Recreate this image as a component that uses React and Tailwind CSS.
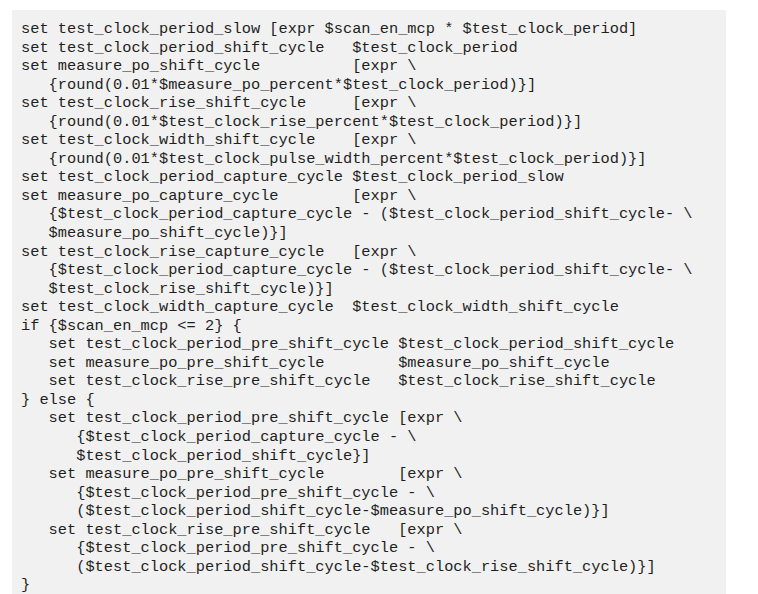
const code = `set test_clock_period_slow [expr $scan_en_mcp * $test_clock_period]
set test_clock_period_shift_cycle   $test_clock_period
set measure_po_shift_cycle          [expr \\
   {round(0.01*$measure_po_percent*$test_clock_period)}]
set test_clock_rise_shift_cycle     [expr \\
   {round(0.01*$test_clock_rise_percent*$test_clock_period)}]
set test_clock_width_shift_cycle    [expr \\
   {round(0.01*$test_clock_pulse_width_percent*$test_clock_period)}]
set test_clock_period_capture_cycle $test_clock_period_slow
set measure_po_capture_cycle        [expr \\
   {$test_clock_period_capture_cycle - ($test_clock_period_shift_cycle- \\
   $measure_po_shift_cycle)}]
set test_clock_rise_capture_cycle   [expr \\
   {$test_clock_period_capture_cycle - ($test_clock_period_shift_cycle- \\
   $test_clock_rise_shift_cycle)}]
set test_clock_width_capture_cycle  $test_clock_width_shift_cycle
if {$scan_en_mcp <= 2} {
   set test_clock_period_pre_shift_cycle $test_clock_period_shift_cycle
   set measure_po_pre_shift_cycle        $measure_po_shift_cycle
   set test_clock_rise_pre_shift_cycle   $test_clock_rise_shift_cycle
} else {
   set test_clock_period_pre_shift_cycle [expr \\
      {$test_clock_period_capture_cycle - \\
      $test_clock_period_shift_cycle}]
   set measure_po_pre_shift_cycle        [expr \\
      {$test_clock_period_pre_shift_cycle - \\
      ($test_clock_period_shift_cycle-$measure_po_shift_cycle)}]
   set test_clock_rise_pre_shift_cycle   [expr \\
      {$test_clock_period_pre_shift_cycle - \\
      ($test_clock_period_shift_cycle-$test_clock_rise_shift_cycle)}]
}`;

export default function App() {
  return (
    <div className="bg-white h-[594px] w-[758px] overflow-hidden pt-[10px] pl-[12px]">
      <pre className="w-[714px] h-[600px] bg-[#f1f1f1] pl-[9px] pt-[10px] m-0 text-[#1f1f1f] text-[15.33px] leading-[18.55px] whitespace-pre font-['Liberation_Mono','Courier_New',monospace]">
        {code}
      </pre>
    </div>
  );
}
